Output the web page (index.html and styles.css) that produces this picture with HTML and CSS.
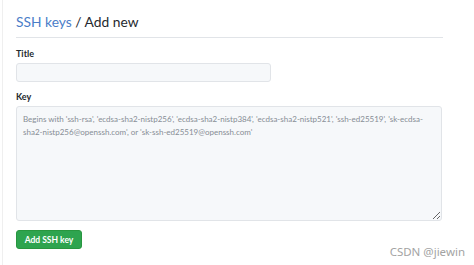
FILE: index.html
```html
<!DOCTYPE html>
<html>
<head>
<meta charset="utf-8">
<link rel="stylesheet" href="styles.css">
</head>
<body>
<div class="page">
  <h2 class="subhead"><a class="crumb" href="#">SSH keys</a> / Add new</h2>
  <form class="form">
    <label class="label" for="title">Title</label>
    <input class="input title-input" id="title" type="text">
    <label class="label key-label" for="key">Key</label>
    <textarea class="input key-input" id="key" placeholder="Begins with 'ssh-rsa', 'ecdsa-sha2-nistp256', 'ecdsa-sha2-nistp384', 'ecdsa-sha2-nistp521', 'ssh-ed25519', 'sk-ecdsa-&#10;sha2-nistp256@openssh.com', or 'sk-ssh-ed25519@openssh.com'"></textarea>
    <button class="btn" type="button">Add SSH key</button>
  </form>
</div>
<div class="watermark">CSDN @jiewin</div>
</body>
</html>
```
FILE: styles.css
```css
html, body {
  margin: 0;
  padding: 0;
  background: #ffffff;
}
body {
  font-family: "Lato", "Noto Sans", sans-serif;
  color: #24292e;
  width: 474px;
  height: 265px;
  overflow: hidden;
  position: relative;
}
.page {
  margin-left: 2px;
  border-left: 1px solid #efefef;
  padding: 12px 0 0 13px;
  height: 253px;
}
.subhead {
  margin: 0;
  width: 427px;
  font-size: 13.8px;
  font-weight: 400;
  line-height: 20px;
  padding-bottom: 5px;
  border-bottom: 1px solid #e1e4e8;
  color: #24292e;
}
.crumb {
  color: #4a7dc8;
  text-decoration: none;
}
.form {
  display: flex;
  flex-direction: column;
  align-items: flex-start;
  margin-top: 10px;
}
.label {
  font-size: 9px;
  font-weight: 700;
  line-height: 12px;
  color: #24292e;
}
.input {
  box-sizing: border-box;
  background: #f6f8fa;
  border: 1px solid #e1e4e8;
  border-radius: 3px;
  margin-top: 3px;
  font-family: inherit;
  outline: none;
}
.title-input {
  width: 255px;
  height: 19px;
}
.key-label {
  margin-top: 9px;
}
.key-input {
  width: 426px;
  height: 115px;
  resize: vertical;
  padding: 6px 6px;
  font-size: 8px;
  line-height: 13px;
  color: #24292e;
}
.key-input::placeholder {
  color: #868d95;
}
.btn {
  margin-top: 9px;
  width: 66px;
  height: 19px;
  padding: 0;
  background: #2ea44f;
  border: 1px solid #28963f;
  border-radius: 3px;
  color: #ffffff;
  font-family: inherit;
  font-size: 8.5px;
  font-weight: 700;
}
.watermark {
  position: absolute;
  right: 9px;
  top: 244px;
  font-size: 11.5px;
  line-height: 16px;
  color: #a3a3a3;
  font-family: "Noto Sans", sans-serif;
}
```
